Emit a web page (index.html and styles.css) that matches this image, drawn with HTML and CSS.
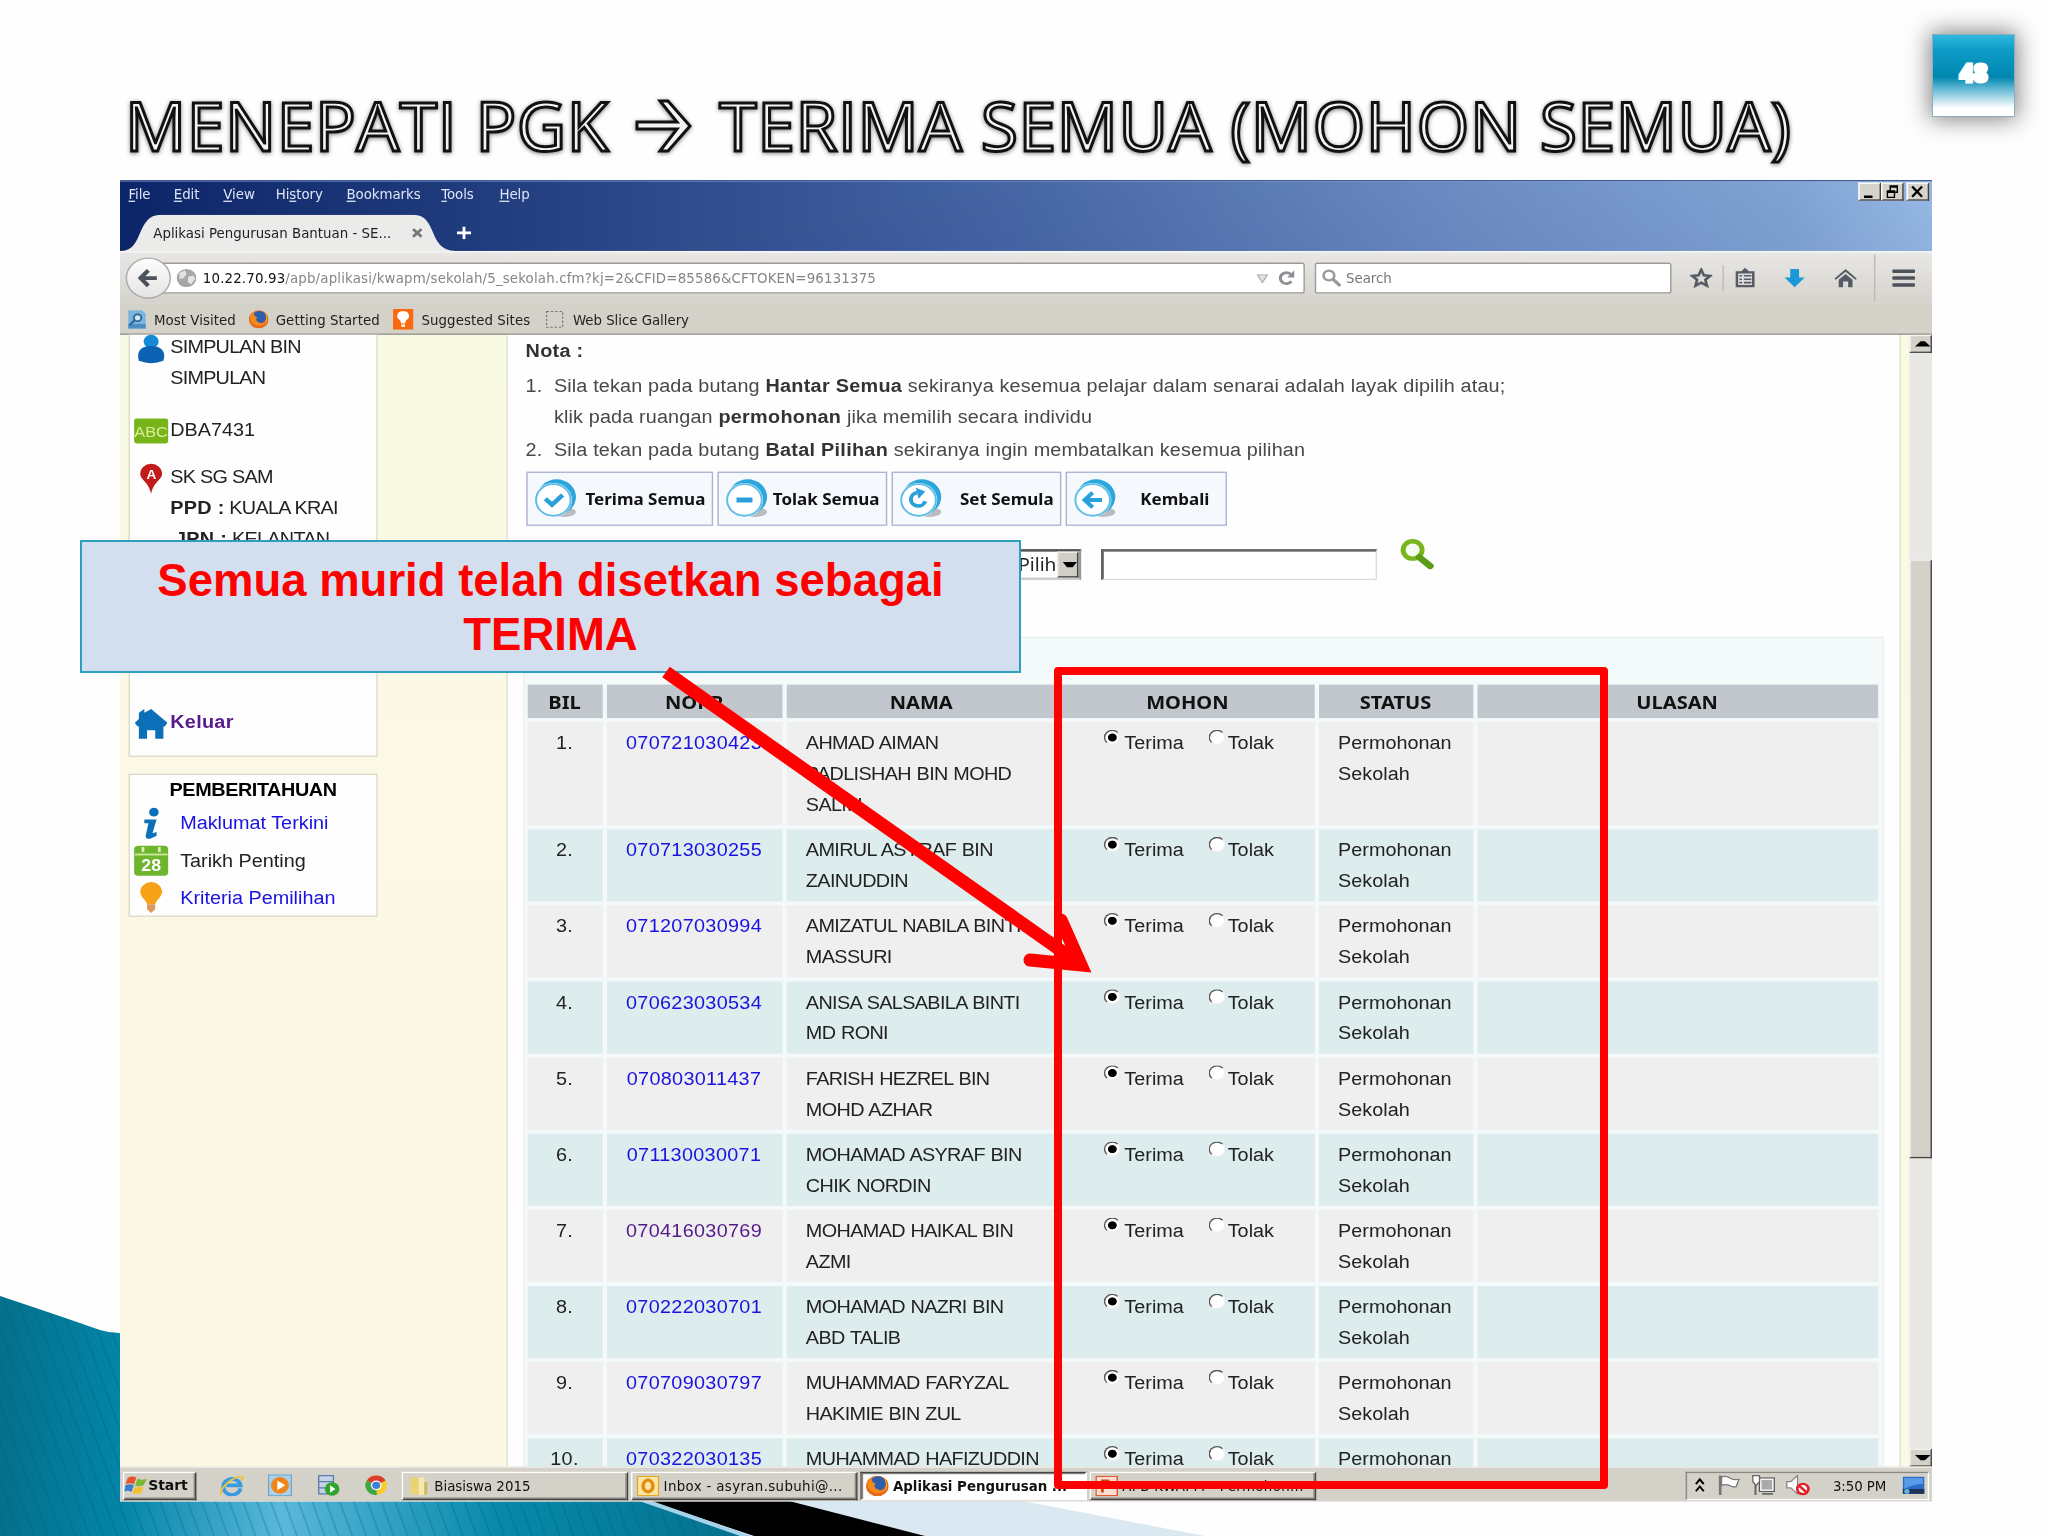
FILE: index.html
```html
<!DOCTYPE html>
<html lang="ms">
<head>
    <meta charset="UTF-8">
    <meta name="viewport" content="width=device-width, initial-scale=1.0">
    <title>Menepati PGK - Terima Semua</title>
    <link rel="stylesheet" href="styles.css">
</head>
<body>
<div class="slide">

    <!-- hiasan latar -->
    <svg class="waves" viewBox="0 0 2048 1536">
        <defs>
            <linearGradient id="teal" x1="0" y1="0" x2="760" y2="0" gradientUnits="userSpaceOnUse">
                <stop offset="0" stop-color="#04708c"/>
                <stop offset=".16" stop-color="#0385a8"/>
                <stop offset=".37" stop-color="#5ab8dc"/>
                <stop offset=".66" stop-color="#0789aa"/>
                <stop offset="1" stop-color="#04708c"/>
            </linearGradient>
            <pattern id="hatch" width="13" height="40" patternUnits="userSpaceOnUse" patternTransform="rotate(-20)">
                <rect width="1.5" height="40" fill="#015a78" opacity=".3"/>
            </pattern>
        </defs>
        <path d="M600 1490L925 1536H1205L1028 1502L900 1480Z" fill="#dae9f1"/>
        <path d="M640 1498L754 1536H925L793 1502L780 1498Z" fill="#000"/>
        <path d="M0 1296Q60 1316 100 1330Q110 1333 119 1333L640 1501L754 1538H0Z" fill="url(#teal)"/>
        <path d="M0 1296Q60 1316 100 1330Q110 1333 119 1333L640 1501L754 1538H0Z" fill="url(#hatch)"/>
        <path d="M640 1499L752 1538" stroke="#a4d3ea" stroke-width="4"/>
    </svg>

    <h1 class="title">MENEPATI PGK <svg class="title-arrow" viewBox="0 0 56 52"><path d="M1 22H41L24 1H32L54 26L32 51H24L41 29H1Z"/></svg> TERIMA SEMUA (MOHON SEMUA)</h1>
    <div class="page-no">48</div>

    <div class="window">
        <!-- title bar, menu, tab -->
        <div class="titlebar">
            <div class="menubar">
                <span><u>F</u>ile</span><span><u>E</u>dit</span><span><u>V</u>iew</span><span>Hi<u>s</u>tory</span><span><u>B</u>ookmarks</span><span><u>T</u>ools</span><span><u>H</u>elp</span>
            </div>
            <div class="win-buttons">
                <button><svg viewBox="0 0 14 12"><path d="M3 9h6v2H3z"/></svg></button>
                <button><svg viewBox="0 0 14 12"><path d="M5 1h6v6H9v4H3V5h2zM6 3v2h3v1h1V3zM4 7v3h4V7z" fill-rule="evenodd"/></svg></button>
                <button class="close"><svg viewBox="0 0 14 12"><path d="M3 2l7 8M10 2l-7 8" stroke="#000" stroke-width="1.6"/></svg></button>
            </div>
            <div class="tabs">
                <svg class="tab-shape" viewBox="0 0 236 28"><path d="M0 28C16 28 10 0 28 0H206C224 0 216 28 236 28Z" fill="#ebebea"/></svg>
                <span class="tab-text">Aplikasi Pengurusan Bantuan - SE...</span>
                <svg class="tab-close" viewBox="0 0 8 8"><path d="M1 1l6 6M7 1l-6 6" stroke="#777" stroke-width="2"/></svg>
                <svg class="tab-new" viewBox="0 0 10 10"><path d="M5 0v10M0 5h10" stroke="#fff" stroke-width="2"/></svg>
            </div>
        </div>

        <div class="navbar">
            <div class="back"><svg viewBox="0 0 16 16"><path d="M8 2L2.500 8L8 14M3 8H14" fill="none" stroke="#4c535a" stroke-width="3"/></svg></div>
            <div class="urlbar">
                <svg class="globe" viewBox="0 0 14 14"><circle cx="7" cy="7" r="7" fill="#a6a6a6"/><path d="M2 3l4-2l1 3l-2 3l-3 1zM8 6l4-1l1 3l-3 4l-2-2z" fill="#e4e4e4"/></svg>
                <span class="url"><b>10.22.70.93</b>/apb/aplikasi/kwapm/sekolah/5_sekolah.cfm?kj=2&amp;CFID=85586&amp;CFTOKEN=96131375</span>
                <svg class="drop" viewBox="0 0 9 8"><path d="M.500.500h8L4.500 7.500z" fill="#e0e0e0" stroke="#aaa"/></svg>
                <svg class="reload" viewBox="0 0 12 12"><path d="M9.500 8.500A4.300 4.300 0 1 1 9 3" fill="none" stroke="#8c9095" stroke-width="2.200"/><path d="M11.500 0v5.500H6.500z" fill="#8c9095"/></svg>
            </div>
            <div class="searchbar">
                <svg viewBox="0 0 14 14"><circle cx="5" cy="5" r="3.800" fill="none" stroke="#999" stroke-width="1.800"/><path d="M8 8l5 5" stroke="#999" stroke-width="2.400"/></svg>
                <span>Search</span>
            </div>
            <div class="tools">
                <svg viewBox="0 0 18 18"><path d="M9 1.800l2.100 4.800l5 .500l-3.800 3.400l1.200 5.200L9 13l-4.500 2.700l1.200-5.200L1.900 7.100l5-.500z" fill="none" stroke="#555c66" stroke-width="2.200"/></svg>
                <i class="sep small"></i>
                <svg viewBox="0 0 18 18"><path d="M2.500 4h13v12h-13z" fill="none" stroke="#555c66" stroke-width="2"/><path d="M6 3l3-3l3 3v1H6z" fill="#555c66"/><path d="M4.500 7h2M8 7h6M4.500 10h2M8 10h6M4.500 13h2M8 13h6" stroke="#555c66" stroke-width="1.400"/></svg>
                <svg viewBox="0 0 18 18"><path d="M5.500 1h7v7.500H17L9 17L1 8.500h4.500z" fill="#1b98d8"/></svg>
                <svg viewBox="0 0 18 18"><path d="M9 1L0 9.500l1.200 1L9 3.500l7.800 7l1.200-1zM3.500 10.500L9 5.500l5.500 5V17h-3.500v-5H7v5H3.500z" fill="#555c66"/></svg>
                <i class="sep"></i>
                <svg viewBox="0 0 18 18"><path d="M1 3h16M1 9h16M1 15h16" stroke="#4c535a" stroke-width="3" stroke-linecap="round"/></svg>
            </div>
        </div>

        <div class="bookmarks">
            <svg viewBox="0 0 16 16"><path d="M1 0h11l3 3v13H1z" fill="#79b4dc"/><path d="M1 12h14v4H1z" fill="#4a8ec2"/><circle cx="8.500" cy="6.500" r="3" fill="#cfe8f8" stroke="#2c6592" stroke-width="1.500"/><path d="M6 9l-4 4" stroke="#2c6592" stroke-width="1.800"/></svg>
            <span>Most Visited</span>
            <svg viewBox="0 0 16 16"><use href="#firefox"/></svg>
            <span>Getting Started</span>
            <svg class="wide" viewBox="0 0 16 18"><path d="M0 0h16v18H0z" fill="#f9690e"/><path d="M8 2a4 4 0 0 0-2.500 7.500L6.500 12.500h3L10.500 9.500A4 4 0 0 0 8 2zM6.500 13.500h3v2h-3z" fill="#fff"/></svg>
            <span>Suggested Sites</span>
            <svg viewBox="0 0 16 16"><rect x="1.500" y="1" width="13" height="14" fill="none" stroke="#777" stroke-dasharray="2 1.500"/></svg>
            <span>Web Slice Gallery</span>
        </div>

        <!-- page -->
        <div class="viewport">
            <div class="side">
                <div class="box profile">
                    <div class="item name"><svg class="ic" viewBox="0 0 26 26"><circle cx="13" cy="7.500" r="5.500" fill="#1489d6"/><path d="M13 11c8 0 11 5 9 12q-9 4-18 0c-2-7 1-12 9-12z" fill="#0b62b4"/></svg><p>SIMPULAN BIN<br>SIMPULAN</p></div>
                    <div class="item code"><svg class="ic" viewBox="0 0 26 26"><rect x=".500" y="3" width="25" height="20" rx="2" fill="#76b41a"/><text x="13" y="18" text-anchor="middle" font-size="12" fill="#d8ee9c">ABC</text></svg><p>DBA7431</p></div>
                    <div class="item school"><svg class="ic" viewBox="0 0 26 26"><path d="M13 1a8 8 0 0 0-8 8c0 5 6 6 8 16c2-10 8-11 8-16a8 8 0 0 0-8-8z" fill="#c11b1b"/><text x="13" y="13" text-anchor="middle" font-size="10" font-weight="bold" fill="#fff">A</text></svg><p>SK SG SAM<br><b>PPD :</b> KUALA KRAI<br>&nbsp;<b>JPN :</b> KELANTAN</p></div>
                    <div class="item exit"><svg class="ic" viewBox="0 0 26 26"><path d="M4 4l4-3v3l5-3l12 11l-2 3h-1v10h-6v-7h-6v7H4V15H3l-2-3l3-3z" fill="#0c70b8"/></svg><p><a class="visited" href="#"><b>Keluar</b></a></p></div>
                </div>
                <div class="box notice">
                    <h4>PEMBERITAHUAN</h4>
                    <div class="item"><svg class="ic" viewBox="0 0 26 26"><circle cx="15" cy="4" r="3.500" fill="#0c70b8"/><path d="M8 10h9l-3 11l3-1v3q-8 5-8 0l2-10H8z" fill="#0c70b8"/></svg><p><a href="#">Maklumat Terkini</a></p></div>
                    <div class="item"><svg class="ic" viewBox="0 0 26 26"><rect x=".500" y="1" width="25" height="24" rx="3" fill="#6db52c"/><path d="M1 8h24" stroke="#c4e592" stroke-width="1.500"/><path d="M7 2v4M19 2v4" stroke="#d8efb8" stroke-width="2"/><text x="13" y="21" text-anchor="middle" font-size="13" font-weight="bold" fill="#fff">28</text></svg><p>Tarikh Penting</p></div>
                    <div class="item"><svg class="ic" viewBox="0 0 26 26"><path d="M13 1a8 8 0 0 0-8 8c0 4 5 7 5 10h6c0-3 5-6 5-10a8 8 0 0 0-8-8z" fill="#f7a116"/><path d="M10 19h6v4l-3 3l-3-3z" fill="#d99a60"/></svg><p><a href="#">Kriteria Pemilihan</a></p></div>
                </div>
            </div>

            <div class="main">
                <p class="nota"><b>Nota :</b></p>
                <ol class="notes">
                    <li>Sila tekan pada butang <b>Hantar Semua</b> sekiranya kesemua pelajar dalam senarai adalah layak dipilih atau;<br>klik pada ruangan <b>permohonan</b> jika memilih secara individu</li>
                    <li>Sila tekan pada butang <b>Batal Pilihan</b> sekiranya ingin membatalkan kesemua pilihan</li>
                </ol>
                <div class="actions">
                    <button class="b1"><svg viewBox="0 0 34 34"><use href="#disc"/><path d="M9 17l5 5l8-8" fill="none" stroke="#2a9fda" stroke-width="3.500"/></svg><span>Terima Semua</span></button>
                    <button class="b2"><svg viewBox="0 0 34 34"><use href="#disc"/><path d="M9 18h12" stroke="#2a9fda" stroke-width="4"/></svg><span>Tolak Semua</span></button>
                    <button class="b3"><svg viewBox="0 0 34 34"><use href="#disc"/><path d="M20 19a5.500 5.500 0 1 1-6-7" fill="none" stroke="#2a9fda" stroke-width="3"/><path d="M13 8l7 3l-5 6z" fill="#2a9fda"/></svg><span>Set Semula</span></button>
                    <button class="b4"><svg viewBox="0 0 34 34"><use href="#disc"/><path d="M22 18H10M15 12l-6 6l6 6" fill="none" stroke="#2a9fda" stroke-width="3.200"/></svg><span>Kembali</span></button>
                </div>
                <div class="filter">
                    <div class="select"><span>Pilih</span><i></i></div>
                    <input type="text">
                    <svg viewBox="0 0 26 26"><circle cx="10" cy="9" r="7" fill="#f6fbef" stroke="#7ab51d" stroke-width="3.600"/><path d="M15 15l8 7" stroke="#5c9c16" stroke-width="5" stroke-linecap="round"/></svg>
                </div>
                <div class="panel">
                    <table>
                        <colgroup><col class="c1"><col class="c2"><col class="c3"><col class="c4"><col class="c5"><col class="c6"></colgroup>
                        <thead>
                            <tr><th>BIL</th><th>NOKP</th><th>NAMA</th><th>MOHON</th><th>STATUS</th><th>ULASAN</th></tr>
                        </thead>
                        <tbody id="senarai"></tbody>
                    </table>
                </div>
            </div>
            <div class="scrollbar"><i class="sb up"></i><i class="thumb"></i><i class="sb down"></i></div>
        </div>

        <div class="taskbar">
            <div class="start"><svg viewBox="0 0 20 18"><path d="M3 2q4-2 7 0L8 8Q5 6 1 8z" fill="#e8542a"/><path d="M11 3q4 2 8 0l-3 6q-4 2-7 0z" fill="#7cb82f"/><path d="M1 9q4-2 7 0l-2 6q-3-2-6 0z" fill="#3b7fd0"/><path d="M9 10q3 2 7 0l-2 6q-4 2-7 0z" fill="#f6c02c"/></svg><b>Start</b></div>
            <div class="quick">
                <svg viewBox="0 0 18 18"><path d="M15.500 11.500A6.500 6.500 0 1 1 15.500 9H5" fill="none" stroke="#3a9be0" stroke-width="3"/><path d="M1 17C-1 12 10 1 17 2c1 1-1 3-1 3" fill="none" stroke="#efc13c" stroke-width="1.500"/></svg>
                <svg viewBox="0 0 18 18"><rect x=".500" y=".500" width="17" height="17" fill="#a9d2ee" stroke="#6fa7cf"/><circle cx="9" cy="9" r="6.800" fill="#f08519"/><path d="M7 5l6 4l-6 4z" fill="#fff"/></svg>
                <svg viewBox="0 0 18 18"><path d="M2 1h11v5H2zM2 6h11v5H2zM2 11h11v5H2z" fill="#c3d3e8" stroke="#5c7ba8"/><circle cx="12" cy="12" r="5.500" fill="#2fa52c"/><path d="M10.500 9l4 3l-4 3z" fill="#fff"/></svg>
                <svg viewBox="0 0 18 18"><circle cx="9" cy="9" r="8" fill="#f7cf2c"/><path d="M9 9L2 5a8 8 0 0 1 14 0z" fill="#dc3c2c"/><path d="M9 9L9.500 17A8 8 0 0 1 2 5z" fill="#3fa648"/><circle cx="9" cy="9" r="4" fill="#fff"/><circle cx="9" cy="9" r="3" fill="#3c7ed8"/></svg>
            </div>
            <div class="task t1"><svg viewBox="0 0 16 16"><path d="M2 1l6 1v13l-6-1z" fill="#e9d375"/><path d="M8 2l4-1v14l-4 0z" fill="#f6eaa6"/><path d="M12 5l2 0v9l-2 1z" fill="#c9b65a"/></svg><span>Biasiswa 2015</span></div>
            <div class="task t2"><svg viewBox="0 0 16 16"><rect x=".500" y=".500" width="15" height="15" fill="#fbe6a4" stroke="#e6a422"/><ellipse cx="8" cy="8" rx="3.500" ry="4.500" fill="none" stroke="#e28f10" stroke-width="2.500"/></svg><span>Inbox - asyran.subuhi@...</span></div>
            <div class="task t3 active"><svg viewBox="0 0 16 16"><use href="#firefox"/></svg><span>Aplikasi Pengurusan ...</span></div>
            <div class="task t4"><svg viewBox="0 0 16 16"><rect x=".500" y=".500" width="15" height="15" fill="#fbded0" stroke="#e0562a"/><path d="M5 13V4h4q3 3 0 5H5" fill="none" stroke="#d8451c" stroke-width="2"/></svg><span>APB KWAPM - Permohon...</span></div>
            <div class="tray">
                <svg class="chev" viewBox="0 0 8 14"><path d="M1 6l3-4l3 4M1 12l3-4l3 4" fill="none" stroke="#000" stroke-width="1.500"/></svg>
                <svg viewBox="0 0 18 18"><path d="M2 1v16" stroke="#777" stroke-width="2"/><path d="M3 2q4-1 6 1q3 2 7 1l-2 6q-3 1-5-1q-3-1-6 0z" fill="#fff" stroke="#777"/></svg>
                <svg viewBox="0 0 18 18"><rect x="6" y="3" width="11" height="11" fill="#aaa" stroke="#555"/><rect x="7" y="4" width="9" height="9" fill="none" stroke="#fff"/><path d="M8 16h8M3 8v9" stroke="#666" stroke-width="1.500"/><path d="M1 1h5v5l-2.500 3L1 6z" fill="#fff" stroke="#666"/></svg>
                <svg viewBox="0 0 18 18"><path d="M1 6h3l5-5v15l-5-5H1z" fill="#fff" stroke="#888"/><circle cx="13" cy="12" r="4.200" fill="#fff" stroke="#e0222a" stroke-width="2"/><path d="M10 9l6 6" stroke="#e0222a" stroke-width="2"/></svg>
                <span>3:50 PM</span>
                <svg viewBox="0 0 18 18"><rect x="1" y="2" width="16" height="14" fill="#2a6bc8"/><path d="M1 12h16v4H1z" fill="#1c3352"/><path d="M2 3h14v5q-7 0-14 4z" fill="#5a9be8"/><circle cx="4" cy="14" r="2" fill="#62b4de"/></svg>
            </div>
        </div>
    </div>

    <!-- anotasi -->
    <div class="frame"></div>
    <div class="callout">Semua murid telah disetkan sebagai TERIMA</div>
    <svg class="arrow" viewBox="0 0 2048 1536">
        <path d="M666 672L1080 964" />
        <path d="M1061 920L1081 965L1030 960" stroke-linecap="round" />
    </svg>
</div>

<svg class="defs">
    <symbol id="firefox" viewBox="0 0 16 16"><circle cx="8" cy="8" r="8" fill="#e66a1a"/><circle cx="8.500" cy="6" r="5.500" fill="#2c5fae"/><path d="M1 5C0 14 12 17 15 9c-2 3-5 3-6 2c-3-1-4-3-2-5c-2 0-3-2-3-4C2 3 2 4 1 5z" fill="#f28a1c"/><path d="M13 2c3 4 2 8 0 10c2-4 1-7 0-10z" fill="#f5b82e"/></symbol>
    <symbol id="disc" viewBox="0 0 34 34"><ellipse cx="23" cy="28" rx="9" ry="4" fill="#b9bdc2"/><circle cx="17.500" cy="15.500" r="14.500" fill="#2ba6de"/><circle cx="15" cy="18" r="14" fill="#fff"/><circle cx="15" cy="18" r="13" fill="none" stroke="#5fbce6" stroke-width="1.500"/></symbol>
</svg>

<script>
    // senarai pelajar
    const pelajar = [
        ["070721030423", "AHMAD AIMAN<br>PADLISHAH BIN MOHD<br>SALMI"],
        ["070713030255", "AMIRUL ASYRAF BIN<br>ZAINUDDIN"],
        ["071207030994", "AMIZATUL NABILA BINTI<br>MASSURI"],
        ["070623030534", "ANISA SALSABILA BINTI<br>MD RONI"],
        ["070803011437", "FARISH HEZREL BIN<br>MOHD AZHAR"],
        ["071130030071", "MOHAMAD ASYRAF BIN<br>CHIK NORDIN"],
        ["070416030769", "MOHAMAD HAIKAL BIN<br>AZMI", "visited"],
        ["070222030701", "MOHAMAD NAZRI BIN<br>ABD TALIB"],
        ["070709030797", "MUHAMMAD FARYZAL<br>HAKIMIE BIN ZUL"],
        ["070322030135", "MUHAMMAD HAFIZUDDIN"]
    ];

    const tbody = document.getElementById('senarai');
    pelajar.forEach(function(p, i) {
        const tr = document.createElement('tr');
        const status = i < 9 ? 'Permohonan<br>Sekolah' : 'Permohonan';
        tr.innerHTML = `
            <td class="center">${i + 1}.</td>
            <td class="center"><a href="#" class="${p[2] || ''}">${p[0]}</a></td>
            <td class="pad nama">${p[1]}</td>
            <td><div class="choice">
                <label><input type="radio" name="m${i}" checked>Terima</label>
                <label><input type="radio" name="m${i}">Tolak</label>
            </div></td>
            <td class="pad">${status}</td>
            <td></td>`;
        tbody.appendChild(tr);
    });
</script>
</body>
</html>
```
FILE: styles.css
```css
* {
    margin: 0;
    padding: 0;
    box-sizing: border-box;
}

body {
    background: #fefefe;
    font-family: "Liberation Sans", Arial, sans-serif;
}

svg {
    display: block;
    flex: none;
}

a {
    color: #1a12e0;
    text-decoration: none;
}

a.visited {
    color: #551a8b;
}

.defs {
    position: absolute;
    width: 0;
    height: 0;
}

.slide {
    position: relative;
    width: 2048px;
    height: 1536px;
    overflow: hidden;
}

.waves,
.arrow {
    position: absolute;
    left: 0;
    top: 0;
    width: 2048px;
    height: 1536px;
}

.arrow {
    fill: none;
    stroke: #f00;
    stroke-width: 13;
    pointer-events: none;
}

.title {
    position: relative;
    height: 180px;
    padding: 77px 0 0 125px;
    font-family: "Open Sans", "Noto Sans", sans-serif;
    font-size: 68px;
    line-height: 96px;
    font-weight: 400;
    letter-spacing: 0.5px;
    white-space: nowrap;
    color: #f4f4f4;
    -webkit-text-stroke: 3px #111;
    filter: drop-shadow(0 1px 2px rgba(0, 0, 0, 0.5));
}

.title-arrow {
    display: inline-block;
    width: 56px;
    height: 52px;
    margin: 0 9px;
    vertical-align: -1px;
    overflow: visible;
    fill: #f4f4f4;
    stroke: #111;
    stroke-width: 3;
}

.page-no {
    position: absolute;
    left: 1932px;
    top: 34px;
    width: 83px;
    height: 83px;
    border: 1px solid #8ab0bd;
    background: linear-gradient(#30b8e0 0, #0e9cc8 18%, #0087b0 52%, #58b4d0 65%, #fff 90%);
    box-shadow: 0 0 22px 2px rgba(0, 0, 0, 0.5);
    color: #fff;
    font-family: "Open Sans", sans-serif;
    font-size: 24px;
    font-weight: 800;
    line-height: 76px;
    text-align: center;
    -webkit-text-stroke: 3px #fff;
}

/* skrin 1280x1024 diregang ke saiz slaid */
.window {
    position: relative;
    width: 1280px;
    height: 1024px;
    margin-left: 120px;
    transform: scale(1.4156, 1.2905);
    transform-origin: 0 0;
    display: flex;
    flex-direction: column;
    font-size: 14px;
    line-height: 24px;
    color: #222;
    background: #fff;
}

.titlebar {
    height: 55px;
    display: grid;
    grid-template-columns: 1fr auto;
    grid-template-rows: 26px 28px;
    background: linear-gradient(168deg, rgba(190, 225, 250, 0) 40%, rgba(0, 0, 80, 0.12)), linear-gradient(90deg, #0c2568 0, #233f80 22%, #4767a6 50%, #7092c8 74%, #8ab0de 92%, #a4caf2 100%);
    border-top: 1px solid #3c5a98;
    font-family: "DejaVu Sans Condensed", "DejaVu Sans", sans-serif;
    font-stretch: condensed;
    font-size: 10.5px;
}

.menubar {
    display: grid;
    grid-template-columns: 32px 35px 37px 50px 67px 41px 40px;
    padding-left: 6px;
    line-height: 20px;
    color: #dfe6f4;
    letter-spacing: -0.05px;
}

.win-buttons {
    display: flex;
    padding: 1px 2px 0 0;
}

.win-buttons button {
    width: 16px;
    height: 14px;
    background: #d6d3cb;
    border: 1px solid;
    border-color: #fff #404040 #404040 #fff;
}

.win-buttons .close {
    margin-left: 2px;
}

.win-buttons svg {
    width: 14px;
    height: 12px;
}

.tabs {
    grid-column: 1 / 3;
    position: relative;
    display: flex;
    align-items: center;
    padding-left: 23.5px;
}

.tab-shape {
    position: absolute;
    left: 1px;
    top: 0;
    width: 236px;
    height: 28px;
}

.tab-text {
    position: relative;
    width: 182px;
    white-space: nowrap;
}

.tab-close {
    position: relative;
    width: 8px;
    height: 8px;
}

.tab-new {
    width: 10px;
    height: 10px;
    margin-left: 24px;
}

.navbar {
    height: 41px;
    display: flex;
    align-items: center;
    padding-left: 4px;
    background: linear-gradient(#e9e7e5, #d6d3cd);
    border-top: 1px solid #f4f4f4;
    font-family: "DejaVu Sans Condensed", "DejaVu Sans", sans-serif;
    font-stretch: condensed;
    font-size: 10.5px;
}

.back {
    position: relative;
    z-index: 1;
    width: 32px;
    height: 32px;
    border: 1px solid #aaa;
    border-radius: 50%;
    background: linear-gradient(#fdfdfd, #e4e4e4);
    padding: 7px;
}

.back svg {
    width: 16px;
    height: 16px;
}

.urlbar {
    width: 812px;
    height: 24px;
    margin-left: -11px;
    padding: 0 6px 0 14px;
    display: flex;
    align-items: center;
    background: #fff;
    border: 1px solid #9c9b98;
    border-radius: 2px;
}

.globe {
    width: 14px;
    height: 14px;
}

.url {
    margin-left: 4.5px;
    flex: 1;
    color: #858585;
    white-space: nowrap;
    letter-spacing: 0.11px;
}

.url b {
    font-weight: 400;
    color: #111;
}

.drop {
    width: 8px;
    height: 7px;
    margin-right: 7px;
}

.reload {
    width: 12px;
    height: 12px;
}

.searchbar {
    width: 252px;
    height: 24px;
    margin-left: 7px;
    padding-left: 4px;
    display: flex;
    align-items: center;
    gap: 3px;
    background: #fff;
    border: 1px solid #9c9b98;
    border-radius: 2px;
    color: #777;
}

.searchbar svg {
    width: 14px;
    height: 14px;
}

.tools {
    flex: 1;
    display: grid;
    grid-template-columns: 26px 10px 30px 36px 28px 13px 28px;
    align-items: center;
    padding-left: 12.5px;
}

.tools svg {
    width: 16px;
    height: 16px;
}

.tools svg:nth-child(3) {
    margin-left: -5px;
}

.sep {
    width: 1px;
    height: 36px;
    background: #bdbab5;
}

.sep.small {
    height: 20px;
    margin-left: -3px;
}

.bookmarks {
    height: 24px;
    display: grid;
    grid-template-columns: 19px 67px 19px 83px 20px 87px 20px 100px;
    align-items: center;
    padding-left: 5px;
    background: #d4d1c9;
    border-bottom: 1px solid #8b8984;
    font-family: "DejaVu Sans Condensed", "DejaVu Sans", sans-serif;
    font-stretch: condensed;
    font-size: 10.5px;
    letter-spacing: 0.03px;
    white-space: nowrap;
}

.bookmarks svg {
    width: 14px;
    height: 16px;
}

.bookmarks .wide {
    width: 16px;
    height: 16px;
    margin-left: -1px;
}

.bookmarks span:last-child {
    letter-spacing: -0.03px;
}

.viewport {
    height: 877px;
    display: flex;
    overflow: hidden;
    background: linear-gradient(#f9fae3 0, #fcf8e6 50%, #fcf8e6 100%);
}

/* sidebar */
.side {
    width: 272.5px;
    padding-left: 6px;
}

.box {
    width: 176px;
    background: #fefefe;
    border: 1px solid #dadbc4;
}

.profile {
    height: 331px;
    margin-top: -4px;
}

.item {
    display: flex;
}

.ic {
    width: 26px;
    height: 25px;
    margin: 1px 1px 0 1.5px;
}

.name {
    letter-spacing: -0.55px;
}

.code {
    margin-top: 16px;
}

.school {
    margin-top: 11px;
    letter-spacing: -0.5px;
}

.exit {
    margin-top: 117.5px;
}

.box p b {
    letter-spacing: 0.2px;
}

.box h4 {
    font-size: 14px;
    text-align: center;
    color: #000;
    line-height: 24px;
    padding-left: 0;
    letter-spacing: -0.3px;
    margin-top: -1px;
}

.notice {
    height: 111px;
    margin-top: 13px;
}

.notice .item {
    height: 28.7px;
    align-items: center;
}

.notice .item p {
    padding-left: 7px;
}

.notice .ic {
    margin-top: 0;
}

/* main */
.main {
    width: 985px;
    padding-left: 13px;
    background: #fefefe;
    border-left: 1px solid #dfe0cc;
    border-right: 1px solid #dfe0cc;
}

.nota {
    color: #333;
    letter-spacing: 0.2px;
}

.notes {
    list-style: none;
    counter-reset: n;
    margin-top: 3px;
    color: #484848;
    white-space: nowrap;
    letter-spacing: 0.1px;
}

.notes li {
    counter-increment: n;
    padding-left: 20px;
    margin-bottom: 2px;
}

.notes li::before {
    content: counter(n) ".";
    display: inline-block;
    width: 20px;
    margin-left: -20px;
}

.notes b {
    color: #333;
    letter-spacing: 0.2px;
}

.actions {
    display: flex;
    gap: 3px;
    margin-top: 5px;
}

.actions button {
    height: 42px;
    display: flex;
    align-items: center;
    justify-content: space-between;
    padding: 0 4px 0 3px;
    background: #f5f9fd;
    border: 1px solid #a9b3d2;
    font-family: "Noto Sans", "Open Sans", sans-serif;
    font-size: 12px;
    font-weight: 700;
    color: #111;
    white-space: nowrap;
}

.actions svg {
    width: 34px;
    height: 32px;
}

.b1 {
    width: 132px;
}

.b2,
.b3 {
    width: 120px;
}

.actions .b4 {
    width: 114px;
    padding-right: 11px;
}

.filter {
    display: flex;
    align-items: flex-start;
    height: 86px;
    padding: 11px 0 0 332px;
}

.select {
    width: 60px;
    height: 24px;
    margin-top: 7px;
    display: flex;
    justify-content: flex-end;
    border: 2px solid;
    border-color: #555 #999 #ccc #555;
    background: #fff;
    font-family: "Noto Sans", sans-serif;
    font-size: 13.5px;
    line-height: 20px;
}

.select i {
    width: 15px;
    flex: none;
    background: #d0cec6;
    border: 1px solid;
    border-color: #eee #444 #444 #eee;
}

.select i::after {
    content: "";
    display: block;
    margin: 7px 0 0 3px;
    border: 3.5px solid transparent;
    border-top: 4px solid #000;
    border-bottom: 0;
}

.filter input {
    width: 195px;
    height: 24px;
    margin: 7px 0 0 14px;
    border: 1px solid #ddd;
    border-top: 2px solid #666;
    border-left: 2px solid #666;
    background: #fff;
}

.filter svg {
    width: 26px;
    height: 25px;
    margin-left: 15px;
    margin-top: -1px;
}

.panel {
    width: 961px;
    height: 900px;
    margin-left: -2px;
    padding-top: 33px;
    background: #f4faf9;
    border: 1px solid #eaf0f0;
}

table {
    width: 960px;
    table-layout: fixed;
    border-collapse: separate;
    border-spacing: 3px;
    margin-left: -1px;
}

.c1 { width: 53px; }
.c2 { width: 124px; }
.c3 { width: 191px; }
.c4 { width: 179px; }
.c5 { width: 109px; }

th {
    height: 26px;
    background: #c1c7cc;
    color: #111;
    font-family: "Noto Sans", "Open Sans", sans-serif;
    font-size: 14.2px;
    font-weight: 700;
    line-height: 25px;
}

td {
    padding: 4px 0;
    vertical-align: top;
    background: #efefef;
    white-space: nowrap;
}

tr:nth-child(even) td {
    background: #ddecec;
}

td.center {
    text-align: center;
    letter-spacing: 0.22px;
}

td.pad {
    padding-left: 14px;
}

td.nama {
    letter-spacing: -0.45px;
    word-spacing: 0.5px;
}

.choice {
    display: flex;
    padding-left: 30px;
}

.choice label {
    display: flex;
    width: 74px;
}

input[type="radio"] {
    appearance: none;
    width: 12px;
    height: 12px;
    margin: 2px 3px 0 0;
    border: 1.5px solid;
    border-color: #555 #eee #eee #555;
    border-radius: 50%;
    background: #fff;
}

input[type="radio"]:checked {
    background: radial-gradient(circle, #000 0 2.8px, #fff 3.4px);
}

.choice label + label input {
    margin-right: 2px;
}

.scrollbar {
    margin-left: 6.5px;
    width: 16px;
    display: flex;
    flex-direction: column;
    background: #e9e8e4;
}

.sb {
    height: 14px;
    background: #d4d1c9;
    border: 1px solid;
    border-color: #f6f6f6 #444 #444 #f6f6f6;
}

.sb::after {
    content: "";
    display: block;
    margin: 4px 0 0 3px;
    border: 4px solid transparent;
}

.up::after {
    border-top: 0;
    border-bottom-color: #000;
}

.down {
    margin-top: auto;
}

.down::after {
    border-bottom: 0;
    border-top-color: #000;
}

.thumb {
    height: 464px;
    margin-top: 160px;
    background: #d4d1c9;
    border: 1px solid;
    border-color: #f6f6f6 #444 #444 #f6f6f6;
}

/* taskbar */
.taskbar {
    height: 27px;
    display: flex;
    align-items: center;
    padding: 1px 2px 0;
    background: #d4d1c9;
    border-top: 1px solid #eeece8;
    font-family: "DejaVu Sans Condensed", "DejaVu Sans", sans-serif;
    font-stretch: condensed;
    font-size: 10.5px;
    color: #111;
}

.start,
.task {
    height: 22px;
    display: flex;
    align-items: center;
    border: 1px solid;
    border-color: #fff #444 #444 #fff;
    box-shadow: inset -1px -1px #8a8882;
    white-space: nowrap;
}

.start {
    width: 52px;
    font-size: 11px;
    letter-spacing: -0.1px;
}

.start svg {
    width: 17px;
    height: 17px;
}

.quick {
    display: flex;
    gap: 16px;
    width: 145px;
    padding-left: 16px;
}

.quick svg {
    width: 18px;
    height: 17px;
}

.task {
    width: 160px;
    margin-right: 2px;
    padding-left: 3px;
    gap: 3px;
}

.task svg {
    width: 16px;
    height: 16px;
}

.t2,
.t4 {
    letter-spacing: 0.25px;
}

.task.active {
    background: #fff;
    border-color: #444 #fff #fff #444;
    box-shadow: inset 1px 1px #8a8882;
    font-weight: 700;
    letter-spacing: 0;
}

.tray {
    width: 172px;
    height: 22px;
    margin-left: auto;
    padding: 0 1px 0 5px;
    display: flex;
    align-items: center;
    gap: 6px;
    border: 1px solid;
    border-color: #8a8882 #fff #fff #8a8882;
    white-space: nowrap;
}

.tray svg {
    width: 18px;
    height: 17px;
}

.tray .chev {
    width: 8px;
    height: 13px;
    margin-right: 2px;
}

.tray span {
    margin: 0 auto 0 10px;
    letter-spacing: -0.05px;
}

/* anotasi */
.frame {
    position: absolute;
    left: 1054px;
    top: 667px;
    width: 554px;
    height: 822px;
    border: 8px solid #f00;
    border-radius: 4px;
}

.callout {
    position: absolute;
    left: 80px;
    top: 540px;
    width: 941px;
    height: 133px;
    padding: 12px 60px 0;
    background: #d3deee;
    border: 2px solid #2f9fbe;
    color: #f00;
    font-size: 45.5px;
    font-weight: 700;
    line-height: 54px;
    text-align: center;
}
```
